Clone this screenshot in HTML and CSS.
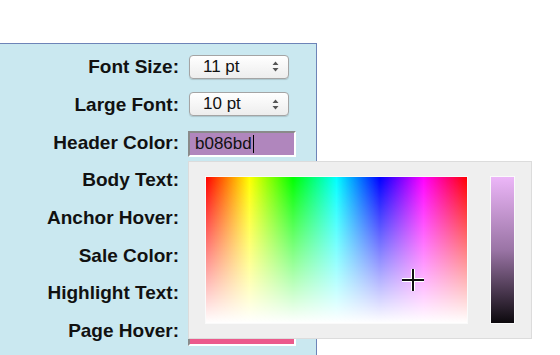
FILE: index.html
```html
<!DOCTYPE html>
<html lang="en">
<head>
  <meta charset="UTF-8">
  <title>Colour Settings</title>
  <link rel="stylesheet" href="styles.css">
</head>
<body>
  <div class="panel">
    <div class="form">
      <label class="label">Font Size:</label>
      <div class="select">
        <span>11 pt</span>
        <svg class="arrows" width="7" height="11" viewBox="0 0 7 11"><path d="M3.5 0.5 L6.5 4 L0.5 4 Z M3.5 10.5 L6.5 7 L0.5 7 Z" fill="#555"/></svg>
      </div>

      <label class="label">Large Font:</label>
      <div class="select">
        <span>10 pt</span>
        <svg class="arrows" width="7" height="11" viewBox="0 0 7 11"><path d="M3.5 0.5 L6.5 4 L0.5 4 Z M3.5 10.5 L6.5 7 L0.5 7 Z" fill="#555"/></svg>
      </div>

      <label class="label">Header Color:</label>
      <div class="color-field">
        <div class="swatch" style="background:#b086bd">b086bd<span class="caret"></span></div>
        <div class="picker">
          <div class="hue">
            <svg class="cross" width="26" height="26" viewBox="0 0 26 26">
              <path d="M13 2 V24 M2 13 H24" stroke="#fff" stroke-width="4"/>
              <path d="M13 2 V24 M2 13 H24" stroke="#111" stroke-width="2"/>
            </svg>
          </div>
          <div class="bright"></div>
        </div>
      </div>

      <label class="label">Body Text:</label>
      <div class="swatch" style="background:#333333"></div>

      <label class="label">Anchor Hover:</label>
      <div class="swatch" style="background:#3366cc"></div>

      <label class="label">Sale Color:</label>
      <div class="swatch" style="background:#cc0000"></div>

      <label class="label">Highlight Text:</label>
      <div class="swatch" style="background:#ffcc00"></div>

      <label class="label">Page Hover:</label>
      <div class="swatch" style="background:#ec5a8c"></div>
    </div>
  </div>
</body>
</html>
```

FILE: styles.css
```css
body {
  margin: 0;
  background: #fff;
  font-family: "Liberation Sans", Arial, sans-serif;
  color: #111;
}
.panel {
  margin-top: 43px;
  width: 317px;
  height: 312px;
  box-sizing: border-box;
  background: #cae8f0;
  border-top: 1px solid #6d84b8;
  border-right: 1px solid #6d84b8;
  padding-top: 4px;
}
.form {
  display: grid;
  grid-template-columns: 179px 108px;
  grid-auto-rows: 37.67px;
  column-gap: 9px;
  align-items: center;
}
.label {
  text-align: right;
  font-weight: bold;
  font-size: 19px;
  line-height: 21px;
}
.select {
  width: 100px;
  height: 24px;
  margin-left: 1px;
  box-sizing: border-box;
  display: flex;
  align-items: center;
  justify-content: space-between;
  padding: 0 9px 0 13px;
  border: 1px solid #a4a4a4;
  border-radius: 4px;
  background: linear-gradient(#ffffff, #ededed);
  box-shadow: 0 1px 1px rgba(0, 0, 0, 0.15);
  font-size: 17px;
}
.color-field {
  position: relative;
  height: 26px;
  margin-top: 4px;
}
.swatch {
  height: 26px;
  box-sizing: border-box;
  border: 2px solid;
  border-color: #8a8a8a #ffffff #ffffff #8a8a8a;
  padding-left: 5px;
  font-size: 17px;
  line-height: 22px;
  display: flex;
  align-items: center;
}
.form > .swatch {
  margin-top: 6px;
}
.caret {
  display: inline-block;
  width: 1px;
  height: 18px;
  background: #000;
  margin-left: 1px;
}
.picker {
  position: absolute;
  z-index: 10;
  top: 30px;
  left: 0;
  width: 344px;
  height: 178px;
  box-sizing: border-box;
  display: flex;
  gap: 22px;
  padding: 14px 16px;
  background: #efefef;
  border: 1px solid #dcdcdc;
}
.hue {
  position: relative;
  width: 264px;
  height: 148px;
  box-sizing: border-box;
  border: 1px solid #fafafa;
  background:
    linear-gradient(to bottom, rgba(255, 255, 255, 0), #ffffff),
    linear-gradient(to right, #ff0000, #ffff00, #00ff00, #00ffff, #0000ff, #ff00ff, #ff0000);
}
.cross {
  position: absolute;
  left: 194px;
  top: 90px;
}
.bright {
  width: 25px;
  height: 148px;
  box-sizing: border-box;
  border: 1px solid #fafafa;
  background: linear-gradient(#ecb6f8, #9a74a5 50%, #0c090d);
}
```
